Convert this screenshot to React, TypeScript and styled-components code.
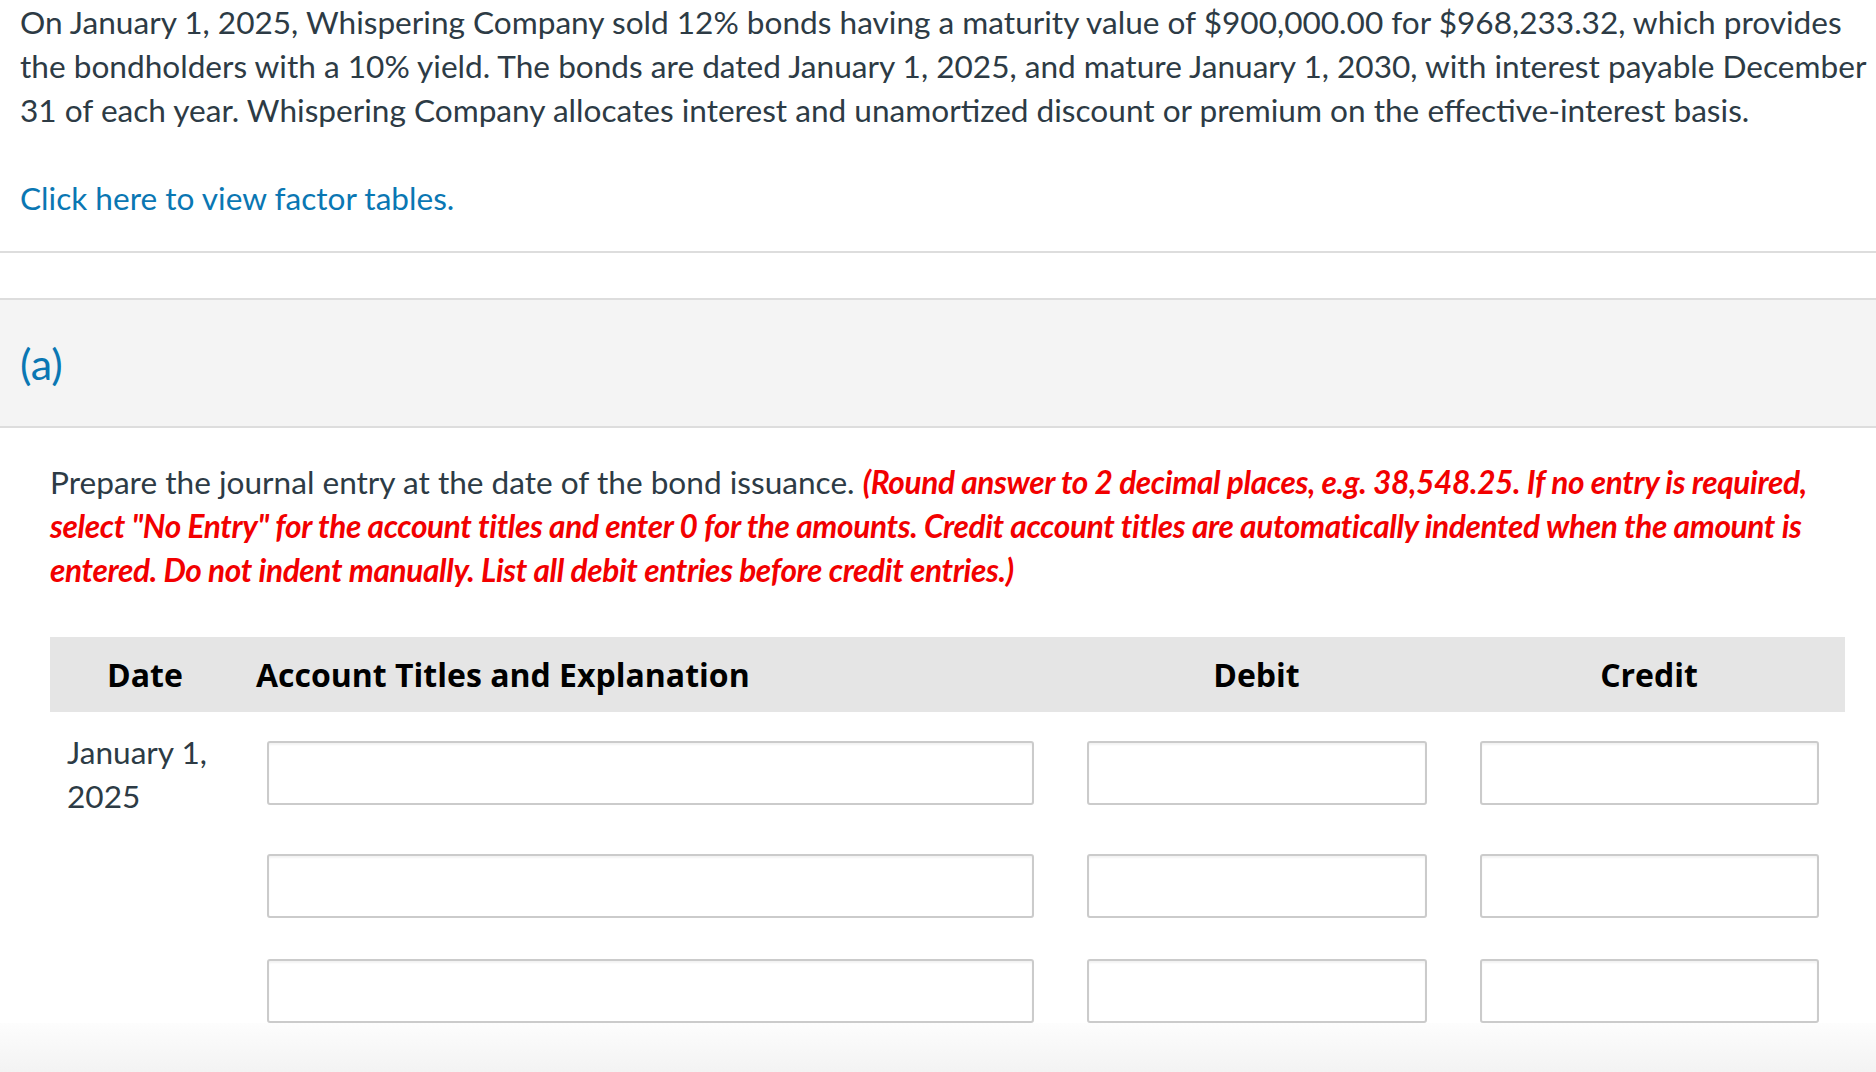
import React from 'react';
import styled, { createGlobalStyle } from 'styled-components';

const GlobalStyle = createGlobalStyle`
  html, body {
    margin: 0;
    padding: 0;
    background: #ffffff;
  }
  body {
    font-family: Lato, "Noto Sans", sans-serif;
    color: #2d3b45;
  }
  * {
    box-sizing: border-box;
  }
`;

const Page = styled.div`
  width: 100%;
  min-height: 1072px;
`;

const Intro = styled.div`
  padding: 0 0 31px 20px;
  border-bottom: 2px solid #dddddd;
`;

const Paragraph = styled.p`
  margin: 0;
  font-size: 31.6px;
  line-height: 44px;
  color: #2d3b45;
`;

const FactorLink = styled.a`
  display: inline-block;
  margin-top: 44px;
  font-size: 31.6px;
  line-height: 44px;
  color: #0a77b3;
  text-decoration: none;
  cursor: pointer;
`;

const Spacer = styled.div`
  height: 45px;
`;

const PartHeader = styled.div`
  display: flex;
  align-items: center;
  height: 130px;
  padding-left: 20px;
  background: #f4f4f4;
  border-top: 2px solid #dddddd;
  border-bottom: 2px solid #dddddd;
`;

const PartLabel = styled.h2`
  margin: 0;
  font-size: 43px;
  font-weight: 400;
  color: #0a77b3;
`;

const Question = styled.div`
  padding: 32px 31px 0 50px;
`;

const Instructions = styled.p`
  margin: 0;
  font-size: 31.6px;
  line-height: 44px;
  color: #2d3b45;
`;

const Hint = styled.span`
  font-weight: 700;
  font-style: italic;
  color: #f20000;
  letter-spacing: -0.35px;
`;

const Journal = styled.div`
  margin-top: 45px;
  display: grid;
  grid-template-columns: 190px 820px 393px 392px;
`;

const HeadCell = styled.div<{ $align: 'left' | 'center' }>`
  height: 75px;
  display: flex;
  align-items: center;
  justify-content: ${({ $align }) => ($align === 'center' ? 'center' : 'flex-start')};
  padding-left: ${({ $align }) => ($align === 'center' ? '0' : '16px')};
  background: #e5e5e5;
  font-family: "Open Sans", "DejaVu Sans", sans-serif;
  font-size: 32px;
  font-weight: 700;
  color: #000000;
`;

const DateCell = styled.div`
  padding: 18px 16px 7px 17px;
  font-size: 31.6px;
  line-height: 44px;
  color: #2d3b45;
`;

const InputCell = styled.div`
  padding: 29px 26px 12px 27px;
`;

const Field = styled.input`
  display: block;
  width: 100%;
  height: 64px;
  border: 2px solid #cbcbcb;
  border-radius: 3px;
  box-shadow: inset 0 2px 2px rgba(0, 0, 0, 0.05);
  background: #ffffff;
  font-family: Lato, sans-serif;
  font-size: 28px;
  padding: 0 12px;
  outline: none;
`;

const FoldShade = styled.div`
  position: fixed;
  left: 0;
  right: 0;
  bottom: 0;
  height: 49px;
  background: linear-gradient(to bottom, #fdfdfd, #f3f3f3);
  pointer-events: none;
`;

const rows = [
  { id: 1, date: 'January 1, 2025' },
  { id: 2, date: '' },
  { id: 3, date: '' },
];

export default function App() {
  return (
    <Page>
      <GlobalStyle />
      <Intro>
        <Paragraph>
          On January 1, 2025, Whispering Company sold 12% bonds having a maturity value of
          $900,000.00 for $968,233.32, which provides the bondholders with a 10% yield. The
          bonds are dated January 1, 2025, and mature January 1, 2030, with interest payable
          December 31 of each year. Whispering Company allocates interest and unamortized
          discount or premium on the effective-interest basis.
        </Paragraph>
        <FactorLink>Click here to view factor tables.</FactorLink>
      </Intro>

      <Spacer />

      <PartHeader>
        <PartLabel>(a)</PartLabel>
      </PartHeader>

      <Question>
        <Instructions>
          Prepare the journal entry at the date of the bond issuance.{' '}
          <Hint>
            (Round answer to 2 decimal places, e.g. 38,548.25. If no entry is required,
            select "No Entry" for the account titles and enter 0 for the amounts. Credit
            account titles are automatically indented when the amount is entered. Do not
            indent manually. List all debit entries before credit entries.)
          </Hint>
        </Instructions>

        <Journal>
          <HeadCell $align="center">Date</HeadCell>
          <HeadCell $align="left">Account Titles and Explanation</HeadCell>
          <HeadCell $align="center">Debit</HeadCell>
          <HeadCell $align="center">Credit</HeadCell>

          {rows.map((row) => (
            <React.Fragment key={row.id}>
              <DateCell>{row.date}</DateCell>
              <InputCell>
                <Field type="text" aria-label="Account title" />
              </InputCell>
              <InputCell>
                <Field type="text" aria-label="Debit amount" />
              </InputCell>
              <InputCell>
                <Field type="text" aria-label="Credit amount" />
              </InputCell>
            </React.Fragment>
          ))}
        </Journal>
      </Question>

      <FoldShade />
    </Page>
  );
}
